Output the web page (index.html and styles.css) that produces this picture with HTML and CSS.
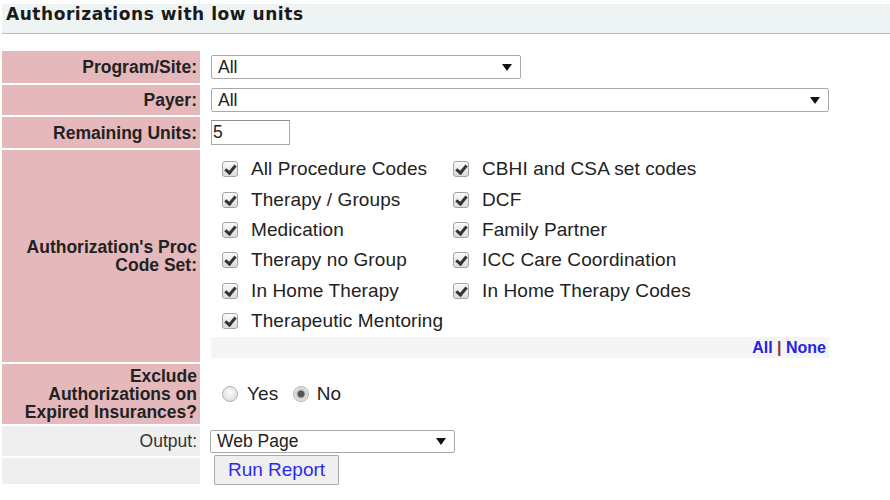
FILE: index.html
```html
<!DOCTYPE html>
<html>
<head>
    <meta charset="utf-8">
    <title>Authorizations with low units</title>
    <link rel="stylesheet" href="styles.css">
</head>
<body>
    <h1 class="report_title">Authorizations with low units</h1>
    <form class="report_form">
        <table class="params">
            <tr class="row_program">
                <th class="req">Program/Site:</th>
                <td>
                    <span class="sel_wrap"><select class="sel sel_program"><option>All</option></select></span>
                </td>
            </tr>
            <tr class="row_payer">
                <th class="req">Payer:</th>
                <td>
                    <span class="sel_wrap"><select class="sel sel_payer"><option>All</option></select></span>
                </td>
            </tr>
            <tr class="row_units">
                <th class="req">Remaining Units:</th>
                <td><input class="txt_units" type="text" value="5"></td>
            </tr>
            <tr class="row_codes">
                <th class="req">Authorization's Proc<br>Code Set:</th>
                <td class="codes_cell">
                    <div class="codes">
                        <label class="code"><input type="checkbox" checked>All Procedure Codes</label>
                        <label class="code"><input type="checkbox" checked>CBHI and CSA set codes</label>
                        <label class="code"><input type="checkbox" checked>Therapy / Groups</label>
                        <label class="code"><input type="checkbox" checked>DCF</label>
                        <label class="code"><input type="checkbox" checked>Medication</label>
                        <label class="code"><input type="checkbox" checked>Family Partner</label>
                        <label class="code"><input type="checkbox" checked>Therapy no Group</label>
                        <label class="code"><input type="checkbox" checked>ICC Care Coordination</label>
                        <label class="code"><input type="checkbox" checked>In Home Therapy</label>
                        <label class="code"><input type="checkbox" checked>In Home Therapy Codes</label>
                        <label class="code"><input type="checkbox" checked>Therapeutic Mentoring</label>
                    </div>
                    <div class="all_none">
                        <a href="#">All</a> <span class="sep">|</span> <a href="#">None</a>
                    </div>
                </td>
            </tr>
            <tr class="row_expired">
                <th class="req">Exclude<br>Authorizations on<br>Expired Insurances?</th>
                <td class="opts_cell">
                    <label class="opt"><input type="radio" name="expired">Yes</label>
                    <label class="opt"><input type="radio" name="expired" checked>No</label>
                </td>
            </tr>
            <tr class="row_output">
                <th>Output:</th>
                <td>
                    <span class="sel_wrap"><select class="sel sel_output"><option>Web Page</option></select></span>
                </td>
            </tr>
            <tr class="row_submit">
                <th></th>
                <td><button type="button" class="btn_run">Run Report</button></td>
            </tr>
        </table>
    </form>
</body>
</html>
```

FILE: styles.css
```css
body{
    margin: 0;
    padding: 4px 0 0 2px;
    font-family: "Liberation Sans", Arial, sans-serif;
    color: #222;
}

.report_title{
    margin: 0;
    height: 29px;
    padding-left: 4px;
    line-height: 29px;
    background: #eef3f3;
    border-bottom: 1px solid #c6bd9c;
    font: bold 17px "DejaVu Sans", Verdana, sans-serif;
    letter-spacing: 0.55px;
    color: #1a1a1a;
}

.report_form{
    margin: 15px 0 0;
}

.params{
    border-collapse: separate;
    border-spacing: 0 2px;
}

.params th{
    width: 195px;
    padding: 0 3px 0 0;
    background: #e5b9bc;
    text-align: right;
    vertical-align: middle;
    font-size: 17.5px;
    line-height: 18px;
    color: #222;
}

.params td{
    padding: 0 0 0 11px;
    vertical-align: middle;
}

.row_program th{ height: 32px; }
.row_payer th{ height: 30px; }
.row_units th{ height: 31px; }
.row_codes th{ height: 212px; }
.row_expired th{ height: 60px; }
.row_output th{ height: 30px; }
.row_submit th{ height: 26px; }

.row_output th,
.row_submit th{
    background: #efefef;
    font-weight: normal;
    color: #333;
}

/* selects */
.sel_wrap{
    position: relative;
    display: inline-block;
    vertical-align: middle;
}

.sel_wrap:after{
    content: "";
    position: absolute;
    right: 9px;
    top: 50%;
    margin-top: -3px;
    border-left: 5px solid transparent;
    border-right: 5px solid transparent;
    border-top: 7px solid #111;
    pointer-events: none;
}

.sel{
    -webkit-appearance: none;
    appearance: none;
    display: block;
    height: 24px;
    margin: 0;
    padding: 0 0 0 6px;
    border: 1px solid #a9a9a9;
    border-radius: 2px;
    background: #fff;
    font-family: "Liberation Sans", Arial, sans-serif;
    font-size: 17.5px;
    color: #222;
}

.sel_program{ width: 310px; }
.sel_payer{ width: 618px; }
.sel_output{
    width: 245px;
    height: 23px;
    margin-left: -1px;
}

.txt_units{
    display: block;
    width: 79px;
    height: 25px;
    box-sizing: border-box;
    margin: 0;
    padding: 0 1px;
    border: 1px solid #a9a9a9;
    border-top-color: #8f8f8f;
    font-family: "Liberation Sans", Arial, sans-serif;
    font-size: 17.5px;
    color: #222;
}

/* procedure code set */
.params td.codes_cell{
    padding: 4px 0 0 11px;
    vertical-align: top;
}

.codes{
    display: grid;
    grid-template-columns: 231px 380px;
    grid-auto-rows: 30.4px;
    padding-left: 11px;
}

.code,
.opt{
    display: flex;
    align-items: center;
    font-size: 19px;
    letter-spacing: 0.1px;
    color: #222;
}

.code input{
    -webkit-appearance: none;
    appearance: none;
    position: relative;
    width: 16px;
    height: 16px;
    margin: 0 13px 0 0;
    border: 1px solid #a3a3a3;
    border-radius: 3px;
    background: linear-gradient(#fbfbfb, #dcdcdc);
}

.code input:checked:after{
    content: "";
    position: absolute;
    left: 4px;
    top: 1px;
    width: 4px;
    height: 8px;
    border-right: 3px solid #333;
    border-bottom: 3px solid #333;
    transform: rotate(40deg);
}

.all_none{
    width: 615px;
    height: 21px;
    margin-top: 1px;
    padding-right: 3px;
    background: #f5f5f5;
    text-align: right;
    font-size: 16px;
    font-weight: bold;
    line-height: 22px;
}

.all_none a{
    color: #2323e6;
    text-decoration: none;
}

.all_none .sep{
    color: #8a3434;
}

/* radios */
.params td.opts_cell{
    padding-left: 22px;
}

.opt{
    display: inline-flex;
    margin-right: 10px;
}

.opt input{
    -webkit-appearance: none;
    appearance: none;
    width: 16px;
    height: 16px;
    margin: 0 9px 0 0;
    border: 1px solid #b0b0b0;
    border-radius: 50%;
    background: radial-gradient(circle at 50% 40%, #fdfdfd, #d6d6d6);
}

.opt input:checked{
    margin-right: 8px;
    background: radial-gradient(circle, #555 0, #555 3px, #c8c8c8 4px, #f4f4f4 8px);
}

/* submit */
.btn_run{
    width: 125px;
    height: 30px;
    margin: -3px 0 -1px 3px;
    padding: 0;
    border: 1px solid #acacac;
    border-radius: 1px;
    background: #efefef;
    font-family: "Liberation Sans", Arial, sans-serif;
    font-size: 19px;
    color: #2b2bef;
    vertical-align: top;
}
```
